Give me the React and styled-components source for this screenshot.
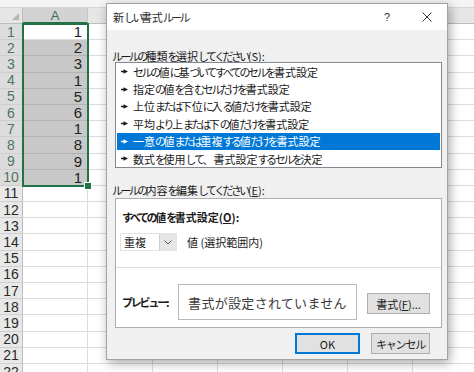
import React from "react";
import styled, { createGlobalStyle } from "styled-components";

const JP = `"Noto Sans CJK JP", "Noto Sans", sans-serif`;
const NUM = `"Liberation Sans", Arial, sans-serif`;
const ROW_H = 16.2;
const COLS = 7;

const Global = createGlobalStyle`
  html, body { margin: 0; padding: 0; background: #ffffff; }
  body { width: 474px; height: 372px; overflow: hidden; font-family: ${JP}; }
`;

const Screen = styled.div`
  position: relative;
  width: 474px;
  height: 372px;
  overflow: hidden;
  background: #ffffff;
`;

/* ---------- spreadsheet ---------- */
const Sheet = styled.div`
  display: flex;
  flex-direction: column;
`;

const TopStrip = styled.div`
  height: 7px;
  background: #f4f4f4;
  border-bottom: 1px solid #d6d6d6;
`;

const Grid = styled.div`
  position: relative;
  display: grid;
  grid-template-columns: 23px repeat(${COLS}, 65px);
  grid-template-rows: 16px;
  grid-auto-rows: ${ROW_H}px;
`;

const Corner = styled.div`
  position: relative;
  box-sizing: border-box;
  background: #e6e6e6;
  border-right: 1px solid #bdbdbd;
  border-bottom: 1px solid #bdbdbd;
`;

const CornerMark = styled.div`
  position: absolute;
  right: 3px;
  bottom: 3px;
  width: 0;
  height: 0;
  border-left: 7px solid transparent;
  border-bottom: 7px solid #b4b4b4;
`;

const ColHead = styled.div`
  box-sizing: border-box;
  display: flex;
  align-items: center;
  justify-content: center;
  background: ${(p) => (p.$sel ? "#d3d3d3" : "#e6e6e6")};
  color: ${(p) => (p.$sel ? "#3e6b55" : "#444")};
  border-right: 1px solid #c6c6c6;
  border-bottom: ${(p) => (p.$sel ? "2px solid #217346" : "1px solid #bdbdbd")};
  font: 13px ${NUM};
`;

const RowHead = styled.div`
  box-sizing: border-box;
  display: flex;
  align-items: center;
  justify-content: center;
  background: ${(p) => (p.$sel ? "#dcdcdc" : "#e8e8e8")};
  color: ${(p) => (p.$sel ? "#4f7563" : "#2a2a2a")};
  border-right: 1px solid #bdbdbd;
  border-bottom: 1px solid #cfcfcf;
  font: 14px ${NUM};
`;

const Cell = styled.div`
  box-sizing: border-box;
  display: flex;
  align-items: center;
  justify-content: flex-end;
  padding-right: 5px;
  background: ${(p) => (p.$tone === "sel" ? "#c8c8c8" : "#ffffff")};
  border-right: 1px solid #dcdcdc;
  border-bottom: 1px solid ${(p) => (p.$tone === "sel" ? "#b4b4b4" : "#dcdcdc")};
  color: #1f1f1f;
  font: 15px ${NUM};
`;

const SelectionFrame = styled.div`
  position: absolute;
  left: 22px;
  top: 15px;
  width: 67px;
  height: ${10 * ROW_H + 2}px;
  box-sizing: border-box;
  border: 2px solid #217346;
  pointer-events: none;
`;

const FillHandle = styled.div`
  position: absolute;
  right: -5px;
  bottom: -5px;
  width: 6px;
  height: 6px;
  background: #217346;
  border: 1px solid #ffffff;
`;

/* ---------- dialog ---------- */
const Window = styled.div`
  position: absolute;
  left: 106px;
  top: 3px;
  width: 342px;
  height: 357px;
  box-sizing: border-box;
  display: flex;
  flex-direction: column;
  background: #f0f0f0;
  border: 1px solid #a3a3a3;
  box-shadow: 2px 3px 10px rgba(0, 0, 0, 0.34);
  font-family: ${JP};
  font-size: 11px;
  color: #1a1a1a;
`;

const Kana = styled.span`
  letter-spacing: ${(p) => p.$ls}px;
`;

const TitleBar = styled.div`
  height: 26px;
  display: flex;
  align-items: center;
  background: #ffffff;
  padding-left: 6px;
`;

const Title = styled.span`
  flex: 1;
  font-size: 11px;
  color: #2b2b2b;
`;

const TitleButton = styled.span`
  width: 40px;
  display: flex;
  align-items: center;
  justify-content: center;
  color: #333;
  font-size: 11px;
  font-family: ${NUM};
`;

const Body = styled.div`
  flex: 1;
  display: flex;
  flex-direction: column;
  padding: 20px 5px 0 5px;
`;

const Label = styled.div`
  height: 12px;
  line-height: 12px;
  margin-top: ${(p) => p.$mt || 0}px;
  white-space: nowrap;
`;

const Key = styled.span`
  text-decoration: underline;
  text-underline-offset: 1px;
`;

const ListBox = styled.div`
  margin: 0 0 0 3px;
  display: flex;
  flex-direction: column;
  background: #ffffff;
  border: 1px solid #828790;
`;

const ListItem = styled.div`
  height: 17.4px;
  display: flex;
  align-items: center;
  gap: 5px;
  margin: 0 1px;
  padding-left: 4px;
  background: ${(p) => (p.$active ? "#0078d7" : "transparent")};
  color: ${(p) => (p.$active ? "#ffffff" : "#1a1a1a")};
  white-space: nowrap;
`;

const GroupBox = styled.div`
  margin: 2px 0 0 3px;
  display: flex;
  flex-direction: column;
  background: #ffffff;
  border: 1px solid #adadad;
`;

const GroupTop = styled.div`
  height: 68px;
  box-sizing: border-box;
  padding: 12px 0 0 6px;
  display: flex;
  flex-direction: column;
  gap: 10px;
`;

const BoldLabel = styled.div`
  height: 12px;
  line-height: 12px;
  font-weight: bold;
  white-space: nowrap;
`;

const Row = styled.div`
  display: flex;
  align-items: center;
  gap: ${(p) => p.$gap || 0}px;
`;

const Combo = styled.div`
  width: 57px;
  height: 18px;
  box-sizing: border-box;
  margin-left: -2px;
  display: flex;
  border: 1px solid #e3e3e3;
  background: #ffffff;
`;

const ComboText = styled.span`
  flex: 1;
  padding-left: 3px;
  line-height: 16px;
`;

const ComboButton = styled.span`
  width: 16px;
  display: flex;
  align-items: center;
  justify-content: center;
  background: #e6e6e6;
  border-left: 1px solid #d0d0d0;
`;

const GroupBottom = styled.div`
  height: 60px;
  box-sizing: border-box;
  border-top: 1px solid #dcdcdc;
  padding: 16px 0 0 6px;
  display: flex;
  align-items: flex-start;
`;

const PreviewLabel = styled.span`
  width: 56px;
  height: 36px;
  display: flex;
  align-items: center;
  font-weight: bold;
  white-space: nowrap;
`;

const PreviewBox = styled.div`
  width: 179px;
  height: 36px;
  box-sizing: border-box;
  display: flex;
  align-items: center;
  justify-content: center;
  border: 1px solid #b9b9b9;
  background: #ffffff;
  font-size: 13px;
  letter-spacing: 0.3px;
  color: #3c3c3c;
`;

const Button = styled.button`
  width: ${(p) => p.$w}px;
  height: 21px;
  box-sizing: border-box;
  padding: 0;
  display: flex;
  align-items: center;
  justify-content: center;
  background: #e1e1e1;
  border: ${(p) => (p.$default ? "2px solid #0078d7" : "1px solid #adadad")};
  font-family: ${JP};
  font-size: 11px;
  color: #1a1a1a;
  white-space: nowrap;
`;

const FormatButton = styled(Button)`
  margin: 9px 0 0 10px;
`;

const ButtonRow = styled.div`
  display: flex;
  justify-content: flex-end;
  gap: 11px;
  margin-top: 5px;
  padding-right: 12px;
`;

/* split Japanese text so that kana runs get the narrow spacing of Meiryo UI */
const Jp = ({ children, ls = -2.6 }) => {
  const parts = String(children).split(/([\u3040-\u30ff]+)/);
  return (
    <>
      {parts.map((p, i) =>
        /[\u3040-\u30ff]/.test(p) ? (
          <Kana key={i} $ls={ls}>
            {p}
          </Kana>
        ) : (
          <React.Fragment key={i}>{p}</React.Fragment>
        )
      )}
    </>
  );
};

const Arrow = ({ color }) => (
  <svg width="7" height="5" viewBox="0 0 7 5">
    <polygon points="0,1.8 2.5,1.8 2.5,0.3 7,2.5 2.5,4.7 2.5,3.2 0,3.2" fill={color} />
  </svg>
);

const Chevron = () => (
  <svg width="8" height="5" viewBox="0 0 8 5">
    <polyline points="0.5,0.5 4,4 7.5,0.5" fill="none" stroke="#555" strokeWidth="1" />
  </svg>
);

const CloseIcon = () => (
  <svg width="10" height="10" viewBox="0 0 10 10">
    <path d="M0.5 0.5 L9.5 9.5 M9.5 0.5 L0.5 9.5" stroke="#333" strokeWidth="1" fill="none" />
  </svg>
);

const values = [1, 2, 3, 1, 5, 6, 1, 8, 9, 1];
const TOTAL_ROWS = 22;

const rules = [
  "セルの値に基づいてすべてのセルを書式設定",
  "指定の値を含むセルだけを書式設定",
  "上位または下位に入る値だけを書式設定",
  "平均より上または下の値だけを書式設定",
  "一意の値または重複する値だけを書式設定",
  "数式を使用して、書式設定するセルを決定",
];

export default function App() {
  const cols = Array.from({ length: COLS });
  return (
    <Screen>
      <Global />
      <Sheet>
        <TopStrip />
        <Grid>
          <Corner>
            <CornerMark />
          </Corner>
          {cols.map((_, c) => (
            <ColHead key={`h${c}`} $sel={c === 0}>
              {c === 0 ? "A" : ""}
            </ColHead>
          ))}
          {Array.from({ length: TOTAL_ROWS }).map((_, r) => (
            <React.Fragment key={r}>
              <RowHead $sel={r < 10}>{r + 1}</RowHead>
              {cols.map((_, c) => (
                <Cell key={c} $tone={c === 0 && r > 0 && r < 10 ? "sel" : "plain"}>
                  {c === 0 && r < 10 ? values[r] : ""}
                </Cell>
              ))}
            </React.Fragment>
          ))}
          <SelectionFrame>
            <FillHandle />
          </SelectionFrame>
        </Grid>
      </Sheet>

      <Window>
        <TitleBar>
          <Title>
            <Jp>新しい書式ルール</Jp>
          </Title>
          <TitleButton>?</TitleButton>
          <TitleButton>
            <CloseIcon />
          </TitleButton>
        </TitleBar>
        <Body>
          <Label>
            <Jp>ルールの種類を選択してください</Jp>(<Key>S</Key>):
          </Label>
          <ListBox>
            {rules.map((t, i) => (
              <ListItem key={i} $active={i === 4}>
                <Arrow color={i === 4 ? "#ffffff" : "#1a1a1a"} />
                <span>
                  <Jp ls={-2.4}>{t}</Jp>
                </span>
              </ListItem>
            ))}
          </ListBox>
          <Label $mt={16}>
            <Jp>ルールの内容を編集してください</Jp>(<Key>E</Key>):
          </Label>
          <GroupBox>
            <GroupTop>
              <BoldLabel>
                <Jp ls={-2.4}>すべての値を書式設定</Jp>(<Key>O</Key>):
              </BoldLabel>
              <Row $gap={10}>
                <Combo>
                  <ComboText>重複</ComboText>
                  <ComboButton>
                    <Chevron />
                  </ComboButton>
                </Combo>
                <span>値 (選択範囲内)</span>
              </Row>
            </GroupTop>
            <GroupBottom>
              <PreviewLabel>
                <Jp ls={-2.2}>プレビュー</Jp>:
              </PreviewLabel>
              <PreviewBox>書式が設定されていません</PreviewBox>
              <FormatButton $w={63}>
                書式(<Key>F</Key>)...
              </FormatButton>
            </GroupBottom>
          </GroupBox>
          <ButtonRow>
            <Button $w={65} $default>
              OK
            </Button>
            <Button $w={59}>
              <Jp ls={-1.2}>キャンセル</Jp>
            </Button>
          </ButtonRow>
        </Body>
      </Window>
    </Screen>
  );
}
